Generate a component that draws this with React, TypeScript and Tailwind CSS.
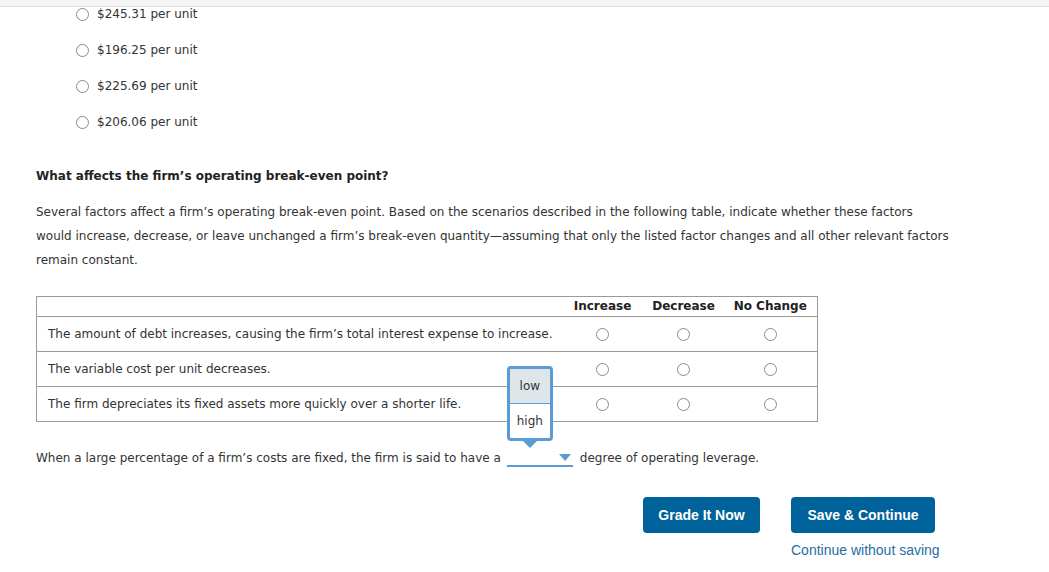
import React from "react";

const Radio = () => (
  <span className="inline-block w-[13px] h-[13px] rounded-full border border-[#8a8a8a] bg-white shrink-0" />
);

const options = ["$245.31 per unit", "$196.25 per unit", "$225.69 per unit", "$206.06 per unit"];

const rows = [
  "The amount of debt increases, causing the firm\u2019s total interest expense to increase.",
  "The variable cost per unit decreases.",
  "The firm depreciates its fixed assets more quickly over a shorter life.",
];

export default function App() {
  return (
    <div className="relative w-[1049px] h-[572px] overflow-hidden bg-white text-[#333] text-[12px]" style={{ fontFamily: '"DejaVu Sans", Verdana, sans-serif' }}>
      <div className="absolute top-0 left-0 right-0 h-[7px] bg-[#f5f5f5] border-b border-[#dcdcdc] z-10" />
      <div className="pl-[36px] -mt-[4px]">
        <div className="flex flex-col pl-[40px]">
          {options.map((o) => (
            <div key={o} className="flex items-center h-[36px] gap-[8px]">
              <Radio />
              <span>{o}</span>
            </div>
          ))}
        </div>
        <div className="mt-[24px] font-bold text-[#222] leading-[24px]">What affects the firm’s operating break-even point?</div>
        <p className="mt-[12px] leading-[24px] w-[915px]">
          Several factors affect a firm’s operating break-even point. Based on the scenarios described in the following table, indicate whether these factors would increase, decrease, or leave unchanged a firm’s break-even quantity—assuming that only the listed factor changes and all other relevant factors remain constant.
        </p>
        <div className="relative mt-[24px] w-[782px]">
          <table className="w-full border-collapse border border-[#9a9a9a]">
            <thead>
              <tr className="h-[20px] border-b border-[#9a9a9a]">
                <th></th>
                <th className="w-[82px] font-bold text-center text-[#222] align-bottom pb-[1px]">Increase</th>
                <th className="w-[80px] font-bold text-center text-[#222] align-bottom pb-[1px]">Decrease</th>
                <th className="w-[94px] font-bold text-center text-[#222] align-bottom pb-[1px]">No Change</th>
              </tr>
            </thead>
            <tbody>
              {rows.map((r) => (
                <tr key={r} className="h-[35px] border-b border-[#9a9a9a]">
                  <td className="pl-[11px] text-left">{r}</td>
                  <td className="text-center"><span className="inline-flex align-middle"><Radio /></span></td>
                  <td className="text-center"><span className="inline-flex align-middle"><Radio /></span></td>
                  <td className="text-center"><span className="inline-flex align-middle"><Radio /></span></td>
                </tr>
              ))}
            </tbody>
          </table>
        </div>
        <div className="relative mt-[26px] flex items-center h-[20px]">
          <span>When a large percentage of a firm’s costs are fixed, the firm is said to have a</span>
          <span className="relative ml-[6px] w-[66px] h-[18px] border-b-2 border-[#5b9bd5] flex items-center justify-end pr-[2px]">
            <svg width="12" height="7" viewBox="0 0 12 7"><path d="M0 0 L12 0 L6 7 Z" fill="#5b9bd5" /></svg>
            <div className="absolute left-0 bottom-[24px] w-[46px]">
              <div className="border-[3px] border-[#5b9bd5] rounded-[4px] bg-white overflow-hidden">
                <div className="h-[35px] bg-[#dfe6e9] flex items-center justify-center border-b border-[#5b9bd5]">low</div>
                <div className="h-[34px] flex items-center justify-center">high</div>
              </div>
              <div className="absolute left-[15px] -bottom-[7px] w-0 h-0 border-l-[8px] border-r-[8px] border-t-[8px] border-l-transparent border-r-transparent border-t-[#5b9bd5]" />
            </div>
          </span>
          <span className="ml-[7px]">degree of operating leverage.</span>
        </div>
        <div className="mt-[29px] flex items-start pl-[607px] gap-[31px]" style={{ fontFamily: '"Liberation Sans", Arial, sans-serif' }}>
          <button className="w-[117px] h-[36px] rounded-[4px] bg-[#00629b] text-white font-bold text-[14px]">Grade It Now</button>
          <div className="flex flex-col items-start">
            <button className="w-[144px] h-[36px] rounded-[4px] bg-[#00629b] text-white font-bold text-[14px]">Save &amp; Continue</button>
            <a className="mt-[9px] text-[14px] text-[#1f6ea5] leading-[16px]">Continue without saving</a>
          </div>
        </div>
      </div>
    </div>
  );
}
